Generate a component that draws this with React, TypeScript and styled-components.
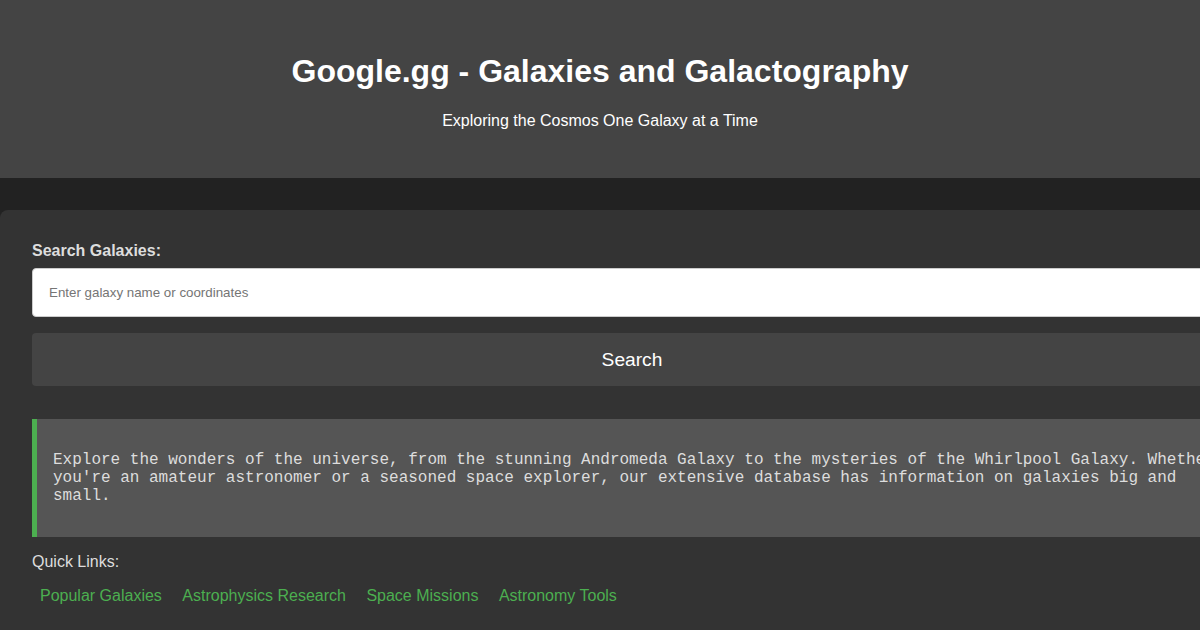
import React from "react";
import styled, { createGlobalStyle } from "styled-components";

const GlobalStyle = createGlobalStyle`
  html, body {
    margin: 0;
    padding: 0;
    background: #222222;
    color: #dddddd;
    font-family: "Liberation Sans", Arial, sans-serif;
    overflow: hidden;
  }
`;

const Header = styled.header`
  background: #444444;
  color: #ffffff;
  text-align: center;
  padding: 32px 20px 28px;
  height: 178px;
  box-sizing: border-box;
`;

const Title = styled.h1`
  font-size: 32px;
  font-weight: bold;
  margin: 21px 0 22px;
  line-height: 37px;
`;

const Subtitle = styled.p`
  font-size: 16px;
  margin: 0;
  line-height: 18px;
`;

const Container = styled.main`
  width: 1200px;
  margin: 32px 0 0;
  padding: 32px;
  background: #333333;
  border-radius: 8px;
`;

const Label = styled.label`
  display: block;
  font-weight: bold;
  font-size: 16px;
  line-height: 18px;
  margin-bottom: 8px;
  color: #dddddd;
`;

const Input = styled.input`
  display: block;
  width: 100%;
  box-sizing: border-box;
  height: 49px;
  padding: 0 16px;
  font-family: "Liberation Sans", Arial, sans-serif;
  font-size: 13.33px;
  border: 1px solid #cccccc;
  border-radius: 4px;
  background: #ffffff;
  color: #333;
  &::placeholder {
    color: #757575;
  }
`;

const Button = styled.button`
  display: block;
  width: 100%;
  height: 53px;
  margin-top: 16px;
  background: #444444;
  color: #ffffff;
  border: none;
  border-radius: 4px;
  font-family: "Liberation Sans", Arial, sans-serif;
  font-size: 19.2px;
  cursor: pointer;
`;

const InfoBox = styled.section`
  margin-top: 33px;
  background: #555555;
  border-left: 5px solid #4caf50;
  padding: 16px;
`;

const InfoText = styled.p`
  margin: 16px 0;
  font-family: "Liberation Mono", "Courier New", monospace;
  font-size: 16px;
  line-height: 18px;
  color: #dddddd;
`;

const LinksLabel = styled.p`
  margin: 16px 0;
  font-size: 16px;
  line-height: 18px;
  color: #dddddd;
`;

const LinkRow = styled.nav`
  margin: 16px 0;
  font-size: 16px;
  line-height: 18px;
`;

const QuickLink = styled.a`
  color: #4caf50;
  text-decoration: none;
  margin: 0 8px;
`;

export default function App() {
  return (
    <>
      <GlobalStyle />
      <Header>
        <Title>Google.gg - Galaxies and Galactography</Title>
        <Subtitle>Exploring the Cosmos One Galaxy at a Time</Subtitle>
      </Header>
      <Container>
        <Label htmlFor="search">Search Galaxies:</Label>
        <Input id="search" placeholder="Enter galaxy name or coordinates" />
        <Button>Search</Button>
        <InfoBox>
          <InfoText>
            Explore the wonders of the universe, from the stunning Andromeda Galaxy to the
            mysteries of the Whirlpool Galaxy. Whether you're an amateur astronomer or a
            seasoned space explorer, our extensive database has information on galaxies big
            and small.
          </InfoText>
        </InfoBox>
        <LinksLabel>Quick Links:</LinksLabel>
        <LinkRow>
          <QuickLink href="#">Popular Galaxies</QuickLink>{" "}
          <QuickLink href="#">Astrophysics Research</QuickLink>{" "}
          <QuickLink href="#">Space Missions</QuickLink>{" "}
          <QuickLink href="#">Astronomy Tools</QuickLink>
        </LinkRow>
      </Container>
    </>
  );
}
